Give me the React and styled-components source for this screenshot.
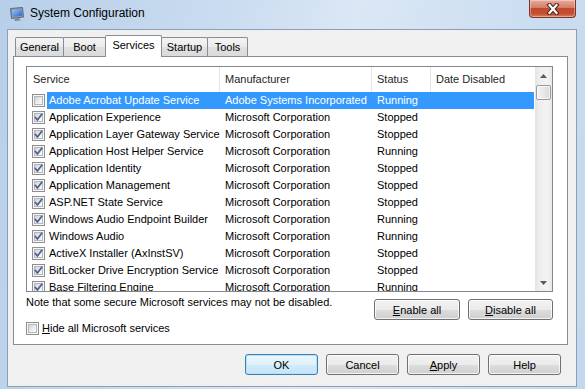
import React, { useId } from "react";
import styled, { createGlobalStyle, css } from "styled-components";

const Global = createGlobalStyle`
  html, body { margin: 0; padding: 0; }
  body { width: 585px; height: 389px; overflow: hidden; background: #c4d8ee; }
  * { box-sizing: border-box; }
`;

const FONT = `"Liberation Sans", Arial, sans-serif`;

const Window = styled.div`
  width: 585px;
  height: 389px;
  display: flex;
  flex-direction: column;
  background: linear-gradient(100deg, #b7cfe9 0%, #cadcf0 35%, #dae7f5 55%, #cfe0f2 75%, #c3d8ee 100%);
  font-family: ${FONT};
  font-size: 11px;
  color: #000;
`;

const TitleBar = styled.div`
  height: 29px;
  flex: none;
  display: flex;
  align-items: flex-start;
  padding-left: 9px;
`;

const TitleIcon = styled.svg`
  margin-top: 6px;
  flex: none;
`;

const TitleText = styled.div`
  margin-left: 5px;
  margin-top: 6px;
  font-size: 12px;
  line-height: 15px;
  color: #000;
`;

const CloseButton = styled.div`
  margin-left: auto;
  margin-right: 9px;
  width: 47px;
  height: 18px;
  border: 1px solid #7d3426;
  border-top: none;
  border-radius: 0 0 4px 4px;
  background: linear-gradient(180deg, #e9ab9b 0%, #d47c68 45%, #c04a31 50%, #c4502f 80%, #d9805e 100%);
  box-shadow: inset 0 0 0 1px rgba(255, 255, 255, 0.35);
  display: flex;
  align-items: center;
  justify-content: center;
`;

const Client = styled.div`
  flex: 1;
  margin: 0 8px 2px 7px;
  border: 1px solid #8d9fb6;
  background: #f0f0f0;
  display: flex;
  flex-direction: column;
  padding: 5px 8px 0 5px;
`;

const TabStrip = styled.div`
  display: flex;
  align-items: flex-end;
  height: 21px;
  padding-left: 2px;
  flex: none;
`;

const Tab = styled.div`
  width: ${(p) => p.$w}px;
  height: 19px;
  margin-left: -1px;
  &:first-child { margin-left: 0; }
  border: 1px solid #898c95;
  border-bottom: none;
  border-radius: 2px 2px 0 0;
  background: linear-gradient(180deg, #f4f4f4 0%, #ebebeb 50%, #e1e1e1 51%, #dadada 100%);
  display: flex;
  align-items: center;
  justify-content: center;
  white-space: nowrap;
  ${(p) =>
    p.$active &&
    css`
      height: 22px;
      margin-bottom: -1px;
      background: #fff;
      position: relative;
      z-index: 2;
      padding-bottom: 3px;
    `}
`;

const Panel = styled.div`
  height: 289px;
  flex: none;
  border: 1px solid #898c95;
  background: #fff;
  padding: 9px 14px 0 12px;
  display: flex;
  flex-direction: column;
`;

const ListView = styled.div`
  height: 226px;
  flex: none;
  border: 1px solid #828790;
  display: flex;
`;

const ListMain = styled.div`
  flex: 1;
  min-width: 0;
  display: flex;
  flex-direction: column;
  overflow: hidden;
`;

const Header = styled.div`
  display: flex;
  height: 25px;
  flex: none;
  background: #fff;
`;

const HeaderCell = styled.div`
  width: ${(p) => (p.$w ? `${p.$w}px` : "auto")};
  flex: ${(p) => (p.$w ? "none" : 1)};
  padding-left: ${(p) => p.$pl}px;
  border-right: ${(p) => (p.$w ? "1px solid #e2e5ea" : "none")};
  line-height: 24px;
  white-space: nowrap;
  color: #1e1e1e;
`;

const Row = styled.div`
  display: flex;
  height: 17px;
  flex: none;
`;

const CheckCell = styled.div`
  width: 20px;
  flex: none;
  display: flex;
  align-items: center;
  padding-left: 5px;
`;

const RowBody = styled.div`
  flex: 1;
  display: flex;
  margin-right: 1px;
  background: ${(p) => (p.$sel ? "#3399ff" : "transparent")};
  color: ${(p) => (p.$sel ? "#fff" : "#000")};
`;

const Cell = styled.div`
  width: ${(p) => (p.$w ? `${p.$w}px` : "auto")};
  flex: ${(p) => (p.$w ? "none" : 1)};
  padding-left: ${(p) => p.$pl}px;
  line-height: 17px;
  white-space: nowrap;
  overflow: hidden;
`;

const ScrollBar = styled.div`
  width: 17px;
  flex: none;
  display: flex;
  flex-direction: column;
  background: linear-gradient(90deg, #e3e3e3 0%, #eeeeee 25%, #f3f3f3 70%, #e8e8e8 100%);
`;

const ScrollBtn = styled.div`
  height: 17px;
  flex: none;
  display: flex;
  align-items: center;
  justify-content: center;
`;

const Thumb = styled.div`
  height: 15px;
  flex: none;
  margin: 1px 1px 0;
  border: 1px solid #9a9a9a;
  border-radius: 2px;
  background: linear-gradient(90deg, #f4f4f4 0%, #e8e8e8 50%, #d9d9d9 100%);
  box-shadow: inset 0 0 0 1px rgba(255, 255, 255, 0.7);
`;

const Track = styled.div`
  flex: 1;
`;

const NoteRow = styled.div`
  display: flex;
  justify-content: space-between;
  align-items: flex-start;
  margin-top: 3px;
  flex: none;
`;

const Note = styled.div`
  line-height: 15px;
  white-space: nowrap;
`;

const ButtonGroup = styled.div`
  display: flex;
  gap: 8px;
  margin-top: 4px;
`;

const Button = styled.button`
  width: ${(p) => p.$w}px;
  height: 21px;
  padding: 0;
  font-family: ${FONT};
  font-size: 11px;
  color: #000;
  border: 1px solid #707070;
  border-radius: 3px;
  background: linear-gradient(180deg, #f2f2f2 0%, #ebebeb 50%, #dddddd 51%, #cfcfcf 100%);
  box-shadow: inset 0 0 0 1px rgba(255, 255, 255, 0.75);
  ${(p) =>
    p.$default &&
    css`
      border-color: #3c7fb1;
      box-shadow: inset 0 0 0 1px #b5e2f7;
      background: linear-gradient(180deg, #eaf6fd 0%, #e0f1fb 50%, #d2ebf9 51%, #c4e4f6 100%);
    `}
`;

const HideRow = styled.div`
  display: flex;
  align-items: center;
  gap: 3px;
  margin-top: 2px;
  height: 13px;
  flex: none;
`;

const Label = styled.span`
  line-height: 13px;
  white-space: nowrap;
`;

const BottomBar = styled.div`
  display: flex;
  justify-content: flex-end;
  gap: 8px;
  margin-top: 9px;
  padding-right: 7px;
  flex: none;
`;

const CheckSvg = styled.svg`
  flex: none;
  display: block;
`;

function CheckBox({ checked }) {
  const id = useId().replace(/:/g, "");
  return (
    <CheckSvg width="13" height="13" viewBox="0 0 13 13">
      <defs>
        <linearGradient id={`g${id}`} x1="0" y1="0" x2="1" y2="1">
          <stop offset="0" stopColor="#cbcfd5" />
          <stop offset="0.6" stopColor="#eef0f2" />
          <stop offset="1" stopColor="#fbfbfb" />
        </linearGradient>
      </defs>
      <rect x="0.5" y="0.5" width="12" height="12" fill="#f6f6f6" stroke="#8e8f8f" />
      <rect x="2.5" y="2.5" width="8" height="8" fill={`url(#g${id})`} stroke="#b4b8be" />
      {checked && (
        <path
          d="M3.2 6.3 L5.4 9 L9.8 3.2"
          fill="none"
          stroke="#4b5f90"
          strokeWidth="1.7"
          strokeLinecap="round"
          strokeLinejoin="round"
        />
      )}
    </CheckSvg>
  );
}

const rows = [
  ["Adobe Acrobat Update Service", "Adobe Systems Incorporated", "Running", false, true],
  ["Application Experience", "Microsoft Corporation", "Stopped", true],
  ["Application Layer Gateway Service", "Microsoft Corporation", "Stopped", true],
  ["Application Host Helper Service", "Microsoft Corporation", "Running", true],
  ["Application Identity", "Microsoft Corporation", "Stopped", true],
  ["Application Management", "Microsoft Corporation", "Stopped", true],
  ["ASP.NET State Service", "Microsoft Corporation", "Stopped", true],
  ["Windows Audio Endpoint Builder", "Microsoft Corporation", "Running", true],
  ["Windows Audio", "Microsoft Corporation", "Running", true],
  ["ActiveX Installer (AxInstSV)", "Microsoft Corporation", "Stopped", true],
  ["BitLocker Drive Encryption Service", "Microsoft Corporation", "Stopped", true],
  ["Base Filtering Engine", "Microsoft Corporation", "Running", true],
];

const tabs = [
  ["General", 49],
  ["Boot", 43],
  ["Services", 57, true],
  ["Startup", 47],
  ["Tools", 41],
];

function Arrow({ down }) {
  return (
    <svg width="7" height="4" viewBox="0 0 7 4">
      <path d={down ? "M0 0 H7 L3.5 4 Z" : "M0 4 H7 L3.5 0 Z"} fill="#5a5a5a" />
    </svg>
  );
}

export default function App() {
  return (
    <>
      <Global />
      <Window>
        <TitleBar>
          <TitleIcon width="16" height="16" viewBox="0 0 16 16">
            <defs>
              <linearGradient id="scr" x1="0" y1="0" x2="1" y2="1">
                <stop offset="0" stopColor="#9cc8f2" />
                <stop offset="1" stopColor="#2a62c4" />
              </linearGradient>
            </defs>
            <path d="M1.5 2.5 L13.5 1.5 L14.5 11 L2.5 12.5 Z" fill="#8e9bb0" stroke="#5d6a80" />
            <path d="M3 4 L12.5 3.2 L13.2 9.8 L3.8 10.8 Z" fill="url(#scr)" />
            <path d="M6 12.5 L10 12 L11.5 14.5 L5.5 15 Z" fill="#7c889c" />
          </TitleIcon>
          <TitleText>System Configuration</TitleText>
          <CloseButton>
            <svg width="14" height="12" viewBox="0 0 14 12">
              <path d="M3.5 2 L10.5 10 M10.5 2 L3.5 10" stroke="#4a241c" strokeWidth="4.2" strokeLinecap="square" />
              <path d="M3.5 2 L10.5 10 M10.5 2 L3.5 10" stroke="#ffffff" strokeWidth="2.2" strokeLinecap="square" />
            </svg>
          </CloseButton>
        </TitleBar>
        <Client>
          <TabStrip>
            {tabs.map(([t, w, a]) => (
              <Tab key={t} $w={w} $active={a}>
                {t}
              </Tab>
            ))}
          </TabStrip>
          <Panel>
            <ListView>
              <ListMain>
                <Header>
                  <HeaderCell $w={193} $pl={6}>Service</HeaderCell>
                  <HeaderCell $w={152} $pl={5}>Manufacturer</HeaderCell>
                  <HeaderCell $w={59} $pl={5}>Status</HeaderCell>
                  <HeaderCell $pl={5}>Date Disabled</HeaderCell>
                </Header>
                {rows.map(([name, manu, status, checked, sel]) => (
                  <Row key={name}>
                    <CheckCell>
                      <CheckBox checked={checked} />
                    </CheckCell>
                    <RowBody $sel={sel}>
                      <Cell $w={173} $pl={2}>{name}</Cell>
                      <Cell $w={152} $pl={5}>{manu}</Cell>
                      <Cell $w={59} $pl={5}>{status}</Cell>
                      <Cell $pl={5}></Cell>
                    </RowBody>
                  </Row>
                ))}
              </ListMain>
              <ScrollBar>
                <ScrollBtn>
                  <Arrow />
                </ScrollBtn>
                <Thumb />
                <Track />
                <ScrollBtn>
                  <Arrow down />
                </ScrollBtn>
              </ScrollBar>
            </ListView>
            <NoteRow>
              <Note>Note that some secure Microsoft services may not be disabled.</Note>
              <ButtonGroup>
                <Button $w={86}>
                  <u>E</u>nable all
                </Button>
                <Button $w={85}>
                  <u>D</u>isable all
                </Button>
              </ButtonGroup>
            </NoteRow>
            <HideRow>
              <CheckBox checked={false} />
              <Label>
                <u>H</u>ide all Microsoft services
              </Label>
            </HideRow>
          </Panel>
          <BottomBar>
            <Button $w={73} $default>OK</Button>
            <Button $w={73}>Cancel</Button>
            <Button $w={73}>
              <u>A</u>pply
            </Button>
            <Button $w={73}>Help</Button>
          </BottomBar>
        </Client>
      </Window>
    </>
  );
}
